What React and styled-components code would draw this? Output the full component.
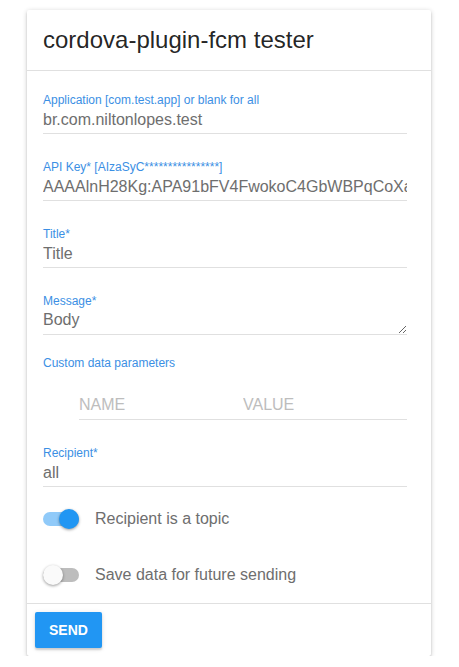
import { createGlobalStyle } from "styled-components";
import styled from "styled-components";

const GlobalStyle = createGlobalStyle`
    html, body {
        margin: 0;
        padding: 0;
        background: #fff;
        font-family: "Liberation Sans", Arial, sans-serif;
    }
`;

const Page = styled.div`
    padding: 10px 28px 0 27px;
`;

const Card = styled.div`
    width: 404px;
    background: #fff;
    border-radius: 2px;
    box-shadow: 0 2px 2px 0 rgba(0, 0, 0, 0.14), 0 3px 1px -2px rgba(0, 0, 0, 0.12), 0 1px 5px 0 rgba(0, 0, 0, 0.2);
`;

const Header = styled.div`
    height: 60px;
    display: flex;
    align-items: center;
    padding: 0 16px;
    border-bottom: 1px solid #e0e0e0;
`;

const Title = styled.h2`
    margin: 0;
    font-size: 24px;
    font-weight: 400;
    color: rgba(0, 0, 0, 0.87);
`;

const Body = styled.div`
    padding: 22px 24px 16px 16px;
    display: flex;
    flex-direction: column;
`;

const Field = styled.div`
    display: flex;
    flex-direction: column;
    margin-bottom: 26px;
`;

const Label = styled.label`
    font-size: 12px;
    line-height: 14px;
    color: #3b8fe4;
`;

const Input = styled.input`
    height: 26px;
    padding: 0;
    border: none;
    border-bottom: 1px solid #e0e0e0;
    font-family: inherit;
    font-size: 16px;
    color: #6e6e6e;
    background: transparent;
    outline: none;
    &::placeholder {
        color: #bdbdbd;
    }
`;

const TextArea = styled.textarea`
    height: 26px;
    padding: 0;
    border: none;
    border-bottom: 1px solid #e0e0e0;
    font-family: inherit;
    font-size: 16px;
    line-height: 24px;
    color: #6e6e6e;
    background: transparent;
    outline: none;
    resize: vertical;
    overflow: hidden;
`;

const SectionLabel = styled.div`
    font-size: 12px;
    line-height: 14px;
    color: #3b8fe4;
    margin-top: -5px;
    margin-bottom: 21px;
`;

const ParamRow = styled.div`
    display: grid;
    grid-template-columns: 1fr 1fr;
    margin-left: 36px;
    margin-bottom: 26px;
`;

const ParamInput = styled(Input)`
    height: 28px;
    min-width: 0;
`;

const ToggleRow = styled.div`
    display: flex;
    align-items: center;
    gap: 16px;
    height: 24px;
    margin-top: ${(p) => p.$top}px;
`;

const Track = styled.div`
    position: relative;
    width: 36px;
    height: 14px;
    border-radius: 7px;
    background: ${(p) => (p.$on ? "rgba(33, 150, 243, 0.5)" : "#bdbdbd")};
`;

const Thumb = styled.div`
    position: absolute;
    top: -3px;
    left: ${(p) => (p.$on ? "16px" : "0")};
    width: 20px;
    height: 20px;
    border-radius: 50%;
    background: ${(p) => (p.$on ? "#2196f3" : "#fafafa")};
    box-shadow: 0 1px 3px rgba(0, 0, 0, 0.4);
`;

const ToggleText = styled.span`
    font-size: 16px;
    color: #6e6e6e;
`;

const Footer = styled.div`
    border-top: 1px solid #e0e0e0;
    padding: 8px;
`;

const Button = styled.button`
    height: 36px;
    padding: 0 14px;
    border: none;
    border-radius: 2px;
    background: #2196f3;
    color: #fff;
    font-family: inherit;
    font-size: 14px;
    font-weight: 700;
    text-transform: uppercase;
    box-shadow: 0 2px 2px 0 rgba(0, 0, 0, 0.14), 0 1px 5px 0 rgba(0, 0, 0, 0.12);
    cursor: pointer;
`;

const Toggle = ({ on, label, top }) => (
    <ToggleRow $top={top}>
        <Track $on={on}>
            <Thumb $on={on} />
        </Track>
        <ToggleText>{label}</ToggleText>
    </ToggleRow>
);

const App = () => {
    return (
        <Page>
            <GlobalStyle />
            <Card>
                <Header>
                    <Title>cordova-plugin-fcm tester</Title>
                </Header>
                <Body>
                    <Field>
                        <Label>Application [com.test.app] or blank for all</Label>
                        <Input defaultValue="br.com.niltonlopes.test" />
                    </Field>
                    <Field>
                        <Label>API Key* [AIzaSyC****************]</Label>
                        <Input defaultValue="AAAAlnH28Kg:APA91bFV4FwokoC4GbWBPqCoXaZ1" />
                    </Field>
                    <Field>
                        <Label>Title*</Label>
                        <Input defaultValue="Title" />
                    </Field>
                    <Field>
                        <Label>Message*</Label>
                        <TextArea defaultValue="Body" />
                    </Field>
                    <SectionLabel>Custom data parameters</SectionLabel>
                    <ParamRow>
                        <ParamInput placeholder="NAME" />
                        <ParamInput placeholder="VALUE" />
                    </ParamRow>
                    <Field>
                        <Label>Recipient*</Label>
                        <Input defaultValue="all" />
                    </Field>
                    <Toggle on label="Recipient is a topic" top={-6} />
                    <Toggle label="Save data for future sending" top={32} />
                </Body>
                <Footer>
                    <Button>Send</Button>
                </Footer>
            </Card>
        </Page>
    );
};

export default App;
